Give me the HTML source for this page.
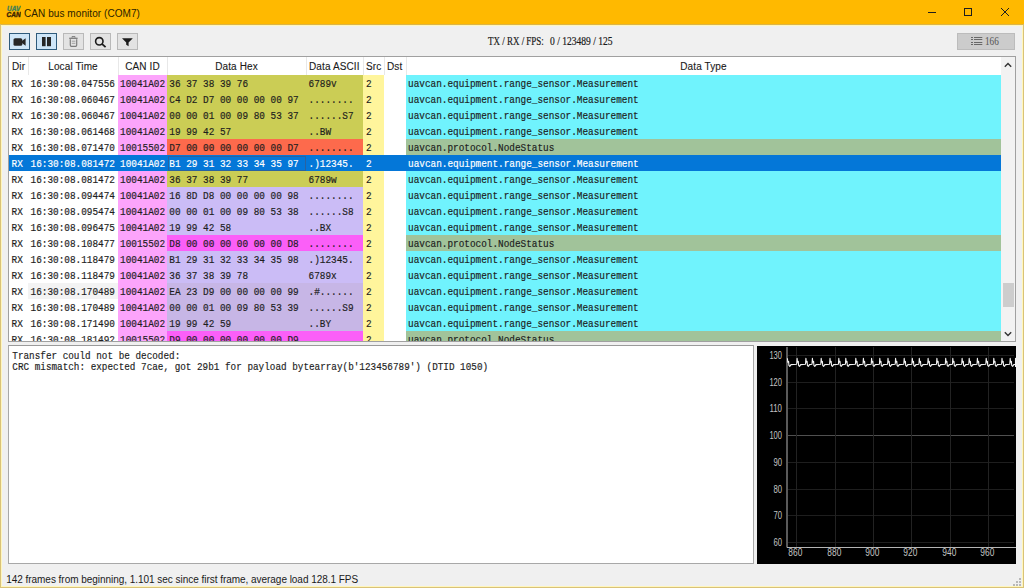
<!DOCTYPE html>
<html><head><meta charset="utf-8">
<style>
*{box-sizing:border-box;margin:0;padding:0}
html,body{width:1024px;height:588px;overflow:hidden;background:#f0f0f0;font-family:"Liberation Sans",sans-serif;}
.abs{position:absolute}
#title{position:absolute;left:0;top:0;width:1024px;height:24px;background:#ffb900}
#title .t{position:absolute;left:24px;top:6.5px;font-size:10px;line-height:14px;color:#2a1d00;letter-spacing:0.07px}
#wb{position:absolute;left:0;top:24px;width:1024px;height:564px;border-left:1px solid #d9c278;border-right:1px solid #d9c278;border-bottom:1px solid #d9c278;border-top:1px solid #dcb54a;box-shadow:inset 1px 1px 0 #fff6bc,inset -1px -1px 0 #fff6bc}
.btn{position:absolute;top:33px;width:21px;height:17px;border:1px solid #b9b9b9;background:#e3e3e3}
.btn.on{border-color:#2f5b7c;background:#cfe6f8;border-bottom-width:1.5px}
#tbl{position:absolute;left:8px;top:56px;width:1008px;height:286px;border:1px solid #a0a0a0;background:#fff;overflow:hidden}
.hdr{position:absolute;top:1px;height:18px;font-size:10px;line-height:18px;color:#1a1a1a;text-align:center;letter-spacing:0.12px;-webkit-text-stroke:0.1px #1a1a1a}
.hsep{position:absolute;top:0;width:1px;height:18px;background:#e8e8e8}
.row{position:absolute;left:0;height:16px;width:992px;font-family:"Liberation Mono",monospace;font-size:9.4px;line-height:16px;color:#1e1e1e;white-space:pre}
.row span{position:absolute;top:0;height:16px;padding-top:1px}
.row span.tx{transform:scaleY(1.15);transform-origin:0 6px;-webkit-text-stroke:0.16px currentColor}
#sb{position:absolute;left:992px;top:0;width:14px;height:284px;background:#f2f2f2}
#edit{position:absolute;left:8px;top:345px;width:746px;height:219px;border:1px solid #a8a8a8;border-top-color:#9a9a9a;background:#fff;font-family:"Liberation Mono",monospace;font-size:9.33px;line-height:11px;color:#1e1e1e;white-space:pre;padding:4px 0 0 3.3px}
#edit span{display:block;transform:scaleY(1.15);transform-origin:0 3px;-webkit-text-stroke:0.15px currentColor;height:11.3px}
#plot{position:absolute;left:757px;top:346px;width:259px;height:218px;background:#000}
#status{position:absolute;left:6.2px;top:573px;font-size:10px;line-height:14px;color:#1a1a1a;letter-spacing:-0.035px}
</style></head><body>

<div id="title">
<svg class="abs" style="left:6px;top:5px" width="15" height="13" viewBox="0 0 15 13"><text x="1" y="5.5" font-family="Liberation Sans" font-weight="bold" font-style="italic" font-size="6.5" fill="#4a8a5e" stroke="#3f7a50" stroke-width="0.35">UAV</text><text x="0.5" y="12" font-family="Liberation Sans" font-weight="bold" font-style="italic" font-size="6.5" fill="#3a2400" stroke="#3a2400" stroke-width="0.35">CAN</text></svg>
<div class="t">CAN bus monitor (COM7)</div>
<div class="abs" style="left:928px;top:12px;width:8px;height:1px;background:#1e1e1e"></div>
<div class="abs" style="left:964px;top:8px;width:8px;height:8px;border:1px solid #1e1e1e"></div>
<svg class="abs" style="left:1000px;top:7px" width="11" height="11" viewBox="0 0 11 11"><path d="M1 1L9 9M9 1L1 9" stroke="#1e1e1e" stroke-width="1"/></svg>
</div>
<div id="wb"></div>
<div class="btn on" style="left:9px"></div><div class="btn on" style="left:36px"></div><div class="btn" style="left:63px"></div><div class="btn" style="left:90px"></div><div class="btn" style="left:117px"></div>
<svg class="abs" style="left:0;top:0" width="150" height="56" viewBox="0 0 150 56"><rect x="13.5" y="38.2" width="8.8" height="7.6" rx="1.6" fill="#262626"/><path d="M21.5 41.2L25.6 38.3V45.7L21.5 42.8Z" fill="#262626"/><rect x="42" y="37" width="3.6" height="9.2" fill="#262626"/><rect x="47" y="37" width="4" height="9.2" fill="#262626"/><path d="M72 37.6V36.6H75V37.6" stroke="#7c7c7c" stroke-width="1" fill="none"/><path d="M69.2 38.3H77.6" stroke="#7c7c7c" stroke-width="1.3"/><path d="M70.3 39.2V45a1.4 1.4 0 0 0 1.4 1.4h3.6a1.4 1.4 0 0 0 1.4-1.4V39.2" stroke="#7c7c7c" stroke-width="1.2" fill="none"/><path d="M71.8 41.2h3.6M71.8 43.3h3.6" stroke="#9a9a9a" stroke-width="0.9"/><circle cx="99.3" cy="41.3" r="3.7" stroke="#1c1c1c" stroke-width="1.6" fill="none"/><path d="M101.9 43.9L105.6 47.1" stroke="#1c1c1c" stroke-width="1.8"/><path d="M122 38.3H132.8L128.6 42.4V46.2L126.2 44.8V42.4Z" fill="#1c1c1c"/></svg>
<div class="abs" style="left:488px;top:34px;font-family:'Liberation Serif',serif;font-size:11.5px;line-height:14px;color:#1a1a1a;white-space:pre;transform:scaleX(0.78);transform-origin:0 0;-webkit-text-stroke:0.2px #1a1a1a">TX / RX / FPS:</div>
<div class="abs" style="left:549.5px;top:34px;font-family:'Liberation Serif',serif;font-size:11.5px;line-height:14px;color:#1a1a1a;white-space:pre;transform:scaleX(0.83);transform-origin:0 0;-webkit-text-stroke:0.2px #1a1a1a">0 / 123489 / 125</div>
<div class="abs" style="left:957px;top:33px;width:58px;height:17px;border:1px solid #bcbcbc;background:#cccccc"></div>
<svg class="abs" style="left:960px;top:33px" width="50" height="17" viewBox="960 33 50 17"><path d="M971 37.5h2M974 37.5h8.3M971 39.5h2M974 39.5h8.3M971 42.5h2M974 42.5h8.3M971 44.5h2M974 44.5h8.3" stroke="#686868" stroke-width="1"/></svg>
<div class="abs" style="left:985px;top:34px;font-family:'Liberation Serif',serif;font-size:11.5px;line-height:14px;color:#5a5a5a;transform:scaleX(0.8);transform-origin:0 0;-webkit-text-stroke:0.1px #5a5a5a">166</div>
<div id="tbl">
<div class="hdr" style="left:0px;width:19px;text-align:left;padding-left:3px">Dir</div>
<div class="hsep" style="left:19px"></div>
<div class="hdr" style="left:19px;width:90px">Local Time</div>
<div class="hsep" style="left:109px"></div>
<div class="hdr" style="left:109px;width:49px">CAN ID</div>
<div class="hsep" style="left:158px"></div>
<div class="hdr" style="left:158px;width:139px">Data Hex</div>
<div class="hsep" style="left:297px"></div>
<div class="hdr" style="left:297px;width:57px;text-align:left;padding-left:3px">Data ASCII</div>
<div class="hsep" style="left:354px"></div>
<div class="hdr" style="left:354px;width:21px;text-align:left;padding-left:3px">Src</div>
<div class="hsep" style="left:375px"></div>
<div class="hdr" style="left:375px;width:22px;text-align:left;padding-left:3px">Dst</div>
<div class="hsep" style="left:397px"></div>
<div class="hdr" style="left:397px;width:595px">Data Type</div>
<div class="row" style="top:18px;color:#1e1e1e">
<span style="left:19px;width:90px;background:#fff"></span>
<span style="left:109px;width:49px;background:#fca4fb"></span>
<span style="left:158px;width:196px;background:#cbcd55"></span>
<span style="left:354px;width:21px;background:#fff59c"></span>
<span style="left:397px;width:595px;background:#70f3fd"></span>
<span class="tx" style="left:2.5px">RX</span>
<span class="tx" style="left:21.5px">16:30:08.047556</span>
<span class="tx" style="left:111px">10041A02</span>
<span class="tx" style="left:160.3px">36 37 38 39 76</span>
<span class="tx" style="left:299.5px">6789v</span>
<span class="tx" style="left:357px">2</span>
<span class="tx" style="left:399px">uavcan.equipment.range_sensor.Measurement</span>
</div>
<div class="row" style="top:34px;color:#1e1e1e">
<span style="left:19px;width:90px;background:#fff"></span>
<span style="left:109px;width:49px;background:#fca4fb"></span>
<span style="left:158px;width:196px;background:#cbcd55"></span>
<span style="left:354px;width:21px;background:#fff59c"></span>
<span style="left:397px;width:595px;background:#70f3fd"></span>
<span class="tx" style="left:2.5px">RX</span>
<span class="tx" style="left:21.5px">16:30:08.060467</span>
<span class="tx" style="left:111px">10041A02</span>
<span class="tx" style="left:160.3px">C4 D2 D7 00 00 00 00 97</span>
<span class="tx" style="left:299.5px">........</span>
<span class="tx" style="left:357px">2</span>
<span class="tx" style="left:399px">uavcan.equipment.range_sensor.Measurement</span>
</div>
<div class="row" style="top:50px;color:#1e1e1e">
<span style="left:19px;width:90px;background:#fff"></span>
<span style="left:109px;width:49px;background:#fca4fb"></span>
<span style="left:158px;width:196px;background:#cbcd55"></span>
<span style="left:354px;width:21px;background:#fff59c"></span>
<span style="left:397px;width:595px;background:#70f3fd"></span>
<span class="tx" style="left:2.5px">RX</span>
<span class="tx" style="left:21.5px">16:30:08.060467</span>
<span class="tx" style="left:111px">10041A02</span>
<span class="tx" style="left:160.3px">00 00 01 00 09 80 53 37</span>
<span class="tx" style="left:299.5px">......S7</span>
<span class="tx" style="left:357px">2</span>
<span class="tx" style="left:399px">uavcan.equipment.range_sensor.Measurement</span>
</div>
<div class="row" style="top:66px;color:#1e1e1e">
<span style="left:19px;width:90px;background:#fff"></span>
<span style="left:109px;width:49px;background:#fca4fb"></span>
<span style="left:158px;width:196px;background:#cbcd55"></span>
<span style="left:354px;width:21px;background:#fff59c"></span>
<span style="left:397px;width:595px;background:#70f3fd"></span>
<span class="tx" style="left:2.5px">RX</span>
<span class="tx" style="left:21.5px">16:30:08.061468</span>
<span class="tx" style="left:111px">10041A02</span>
<span class="tx" style="left:160.3px">19 99 42 57</span>
<span class="tx" style="left:299.5px">..BW</span>
<span class="tx" style="left:357px">2</span>
<span class="tx" style="left:399px">uavcan.equipment.range_sensor.Measurement</span>
</div>
<div class="row" style="top:82px;color:#1e1e1e">
<span style="left:19px;width:90px;background:#fff"></span>
<span style="left:109px;width:49px;background:#fca4fb"></span>
<span style="left:158px;width:196px;background:#fd6a4c"></span>
<span style="left:354px;width:21px;background:#fff59c"></span>
<span style="left:397px;width:595px;background:#a1c39a"></span>
<span class="tx" style="left:2.5px">RX</span>
<span class="tx" style="left:21.5px">16:30:08.071470</span>
<span class="tx" style="left:111px">10015502</span>
<span class="tx" style="left:160.3px">D7 00 00 00 00 00 00 D7</span>
<span class="tx" style="left:299.5px">........</span>
<span class="tx" style="left:357px">2</span>
<span class="tx" style="left:399px">uavcan.protocol.NodeStatus</span>
</div>
<div class="row" style="top:98px;color:#fff">
<span style="left:0;width:992px;background:#0477d8"></span>
<span style="left:159px;top:1px;width:138px;height:15px;border:1px solid #2a62a0"></span>
<span class="tx" style="left:2.5px">RX</span>
<span class="tx" style="left:21.5px">16:30:08.081472</span>
<span class="tx" style="left:111px">10041A02</span>
<span class="tx" style="left:160.3px">B1 29 31 32 33 34 35 97</span>
<span class="tx" style="left:299.5px">.)12345.</span>
<span class="tx" style="left:357px">2</span>
<span class="tx" style="left:399px">uavcan.equipment.range_sensor.Measurement</span>
</div>
<div class="row" style="top:114px;color:#1e1e1e">
<span style="left:19px;width:90px;background:#fff"></span>
<span style="left:109px;width:49px;background:#fca4fb"></span>
<span style="left:158px;width:196px;background:#cbcd55"></span>
<span style="left:354px;width:21px;background:#fff59c"></span>
<span style="left:397px;width:595px;background:#70f3fd"></span>
<span class="tx" style="left:2.5px">RX</span>
<span class="tx" style="left:21.5px">16:30:08.081472</span>
<span class="tx" style="left:111px">10041A02</span>
<span class="tx" style="left:160.3px">36 37 38 39 77</span>
<span class="tx" style="left:299.5px">6789w</span>
<span class="tx" style="left:357px">2</span>
<span class="tx" style="left:399px">uavcan.equipment.range_sensor.Measurement</span>
</div>
<div class="row" style="top:130px;color:#1e1e1e">
<span style="left:19px;width:90px;background:#fff"></span>
<span style="left:109px;width:49px;background:#fca4fb"></span>
<span style="left:158px;width:196px;background:#cbbcf6"></span>
<span style="left:354px;width:21px;background:#fff59c"></span>
<span style="left:397px;width:595px;background:#70f3fd"></span>
<span class="tx" style="left:2.5px">RX</span>
<span class="tx" style="left:21.5px">16:30:08.094474</span>
<span class="tx" style="left:111px">10041A02</span>
<span class="tx" style="left:160.3px">16 8D D8 00 00 00 00 98</span>
<span class="tx" style="left:299.5px">........</span>
<span class="tx" style="left:357px">2</span>
<span class="tx" style="left:399px">uavcan.equipment.range_sensor.Measurement</span>
</div>
<div class="row" style="top:146px;color:#1e1e1e">
<span style="left:19px;width:90px;background:#fff"></span>
<span style="left:109px;width:49px;background:#fca4fb"></span>
<span style="left:158px;width:196px;background:#cbbcf6"></span>
<span style="left:354px;width:21px;background:#fff59c"></span>
<span style="left:397px;width:595px;background:#70f3fd"></span>
<span class="tx" style="left:2.5px">RX</span>
<span class="tx" style="left:21.5px">16:30:08.095474</span>
<span class="tx" style="left:111px">10041A02</span>
<span class="tx" style="left:160.3px">00 00 01 00 09 80 53 38</span>
<span class="tx" style="left:299.5px">......S8</span>
<span class="tx" style="left:357px">2</span>
<span class="tx" style="left:399px">uavcan.equipment.range_sensor.Measurement</span>
</div>
<div class="row" style="top:162px;color:#1e1e1e">
<span style="left:19px;width:90px;background:#fff"></span>
<span style="left:109px;width:49px;background:#fca4fb"></span>
<span style="left:158px;width:196px;background:#cbbcf6"></span>
<span style="left:354px;width:21px;background:#fff59c"></span>
<span style="left:397px;width:595px;background:#70f3fd"></span>
<span class="tx" style="left:2.5px">RX</span>
<span class="tx" style="left:21.5px">16:30:08.096475</span>
<span class="tx" style="left:111px">10041A02</span>
<span class="tx" style="left:160.3px">19 99 42 58</span>
<span class="tx" style="left:299.5px">..BX</span>
<span class="tx" style="left:357px">2</span>
<span class="tx" style="left:399px">uavcan.equipment.range_sensor.Measurement</span>
</div>
<div class="row" style="top:178px;color:#1e1e1e">
<span style="left:19px;width:90px;background:#fff"></span>
<span style="left:109px;width:49px;background:#fca4fb"></span>
<span style="left:158px;width:196px;background:#fb5ff8"></span>
<span style="left:354px;width:21px;background:#fff59c"></span>
<span style="left:397px;width:595px;background:#a1c39a"></span>
<span class="tx" style="left:2.5px">RX</span>
<span class="tx" style="left:21.5px">16:30:08.108477</span>
<span class="tx" style="left:111px">10015502</span>
<span class="tx" style="left:160.3px">D8 00 00 00 00 00 00 D8</span>
<span class="tx" style="left:299.5px">........</span>
<span class="tx" style="left:357px">2</span>
<span class="tx" style="left:399px">uavcan.protocol.NodeStatus</span>
</div>
<div class="row" style="top:194px;color:#1e1e1e">
<span style="left:19px;width:90px;background:#fff"></span>
<span style="left:109px;width:49px;background:#fca4fb"></span>
<span style="left:158px;width:196px;background:#cbbcf6"></span>
<span style="left:354px;width:21px;background:#fff59c"></span>
<span style="left:397px;width:595px;background:#70f3fd"></span>
<span class="tx" style="left:2.5px">RX</span>
<span class="tx" style="left:21.5px">16:30:08.118479</span>
<span class="tx" style="left:111px">10041A02</span>
<span class="tx" style="left:160.3px">B1 29 31 32 33 34 35 98</span>
<span class="tx" style="left:299.5px">.)12345.</span>
<span class="tx" style="left:357px">2</span>
<span class="tx" style="left:399px">uavcan.equipment.range_sensor.Measurement</span>
</div>
<div class="row" style="top:210px;color:#1e1e1e">
<span style="left:19px;width:90px;background:#fff"></span>
<span style="left:109px;width:49px;background:#fca4fb"></span>
<span style="left:158px;width:196px;background:#cbbcf6"></span>
<span style="left:354px;width:21px;background:#fff59c"></span>
<span style="left:397px;width:595px;background:#70f3fd"></span>
<span class="tx" style="left:2.5px">RX</span>
<span class="tx" style="left:21.5px">16:30:08.118479</span>
<span class="tx" style="left:111px">10041A02</span>
<span class="tx" style="left:160.3px">36 37 38 39 78</span>
<span class="tx" style="left:299.5px">6789x</span>
<span class="tx" style="left:357px">2</span>
<span class="tx" style="left:399px">uavcan.equipment.range_sensor.Measurement</span>
</div>
<div class="row" style="top:226px;color:#1e1e1e">
<span style="left:19px;width:90px;background:#f3f3f3"></span>
<span style="left:109px;width:49px;background:#fca4fb"></span>
<span style="left:158px;width:196px;background:#c7b6e6"></span>
<span style="left:354px;width:21px;background:#fff59c"></span>
<span style="left:397px;width:595px;background:#70f3fd"></span>
<span class="tx" style="left:2.5px">RX</span>
<span class="tx" style="left:21.5px">16:30:08.170489</span>
<span class="tx" style="left:111px">10041A02</span>
<span class="tx" style="left:160.3px">EA 23 D9 00 00 00 00 99</span>
<span class="tx" style="left:299.5px">.#......</span>
<span class="tx" style="left:357px">2</span>
<span class="tx" style="left:399px">uavcan.equipment.range_sensor.Measurement</span>
</div>
<div class="row" style="top:242px;color:#1e1e1e">
<span style="left:19px;width:90px;background:#fff"></span>
<span style="left:109px;width:49px;background:#fca4fb"></span>
<span style="left:158px;width:196px;background:#c7b6e6"></span>
<span style="left:354px;width:21px;background:#fff59c"></span>
<span style="left:397px;width:595px;background:#70f3fd"></span>
<span class="tx" style="left:2.5px">RX</span>
<span class="tx" style="left:21.5px">16:30:08.170489</span>
<span class="tx" style="left:111px">10041A02</span>
<span class="tx" style="left:160.3px">00 00 01 00 09 80 53 39</span>
<span class="tx" style="left:299.5px">......S9</span>
<span class="tx" style="left:357px">2</span>
<span class="tx" style="left:399px">uavcan.equipment.range_sensor.Measurement</span>
</div>
<div class="row" style="top:258px;color:#1e1e1e">
<span style="left:19px;width:90px;background:#fff"></span>
<span style="left:109px;width:49px;background:#fca4fb"></span>
<span style="left:158px;width:196px;background:#c7b6e6"></span>
<span style="left:354px;width:21px;background:#fff59c"></span>
<span style="left:397px;width:595px;background:#70f3fd"></span>
<span class="tx" style="left:2.5px">RX</span>
<span class="tx" style="left:21.5px">16:30:08.171490</span>
<span class="tx" style="left:111px">10041A02</span>
<span class="tx" style="left:160.3px">19 99 42 59</span>
<span class="tx" style="left:299.5px">..BY</span>
<span class="tx" style="left:357px">2</span>
<span class="tx" style="left:399px">uavcan.equipment.range_sensor.Measurement</span>
</div>
<div class="row" style="top:274px;color:#1e1e1e">
<span style="left:19px;width:90px;background:#fff"></span>
<span style="left:109px;width:49px;background:#fca4fb"></span>
<span style="left:158px;width:196px;background:#fb5ff8"></span>
<span style="left:354px;width:21px;background:#fff59c"></span>
<span style="left:397px;width:595px;background:#a1c39a"></span>
<span class="tx" style="left:2.5px">RX</span>
<span class="tx" style="left:21.5px">16:30:08.181492</span>
<span class="tx" style="left:111px">10015502</span>
<span class="tx" style="left:160.3px">D9 00 00 00 00 00 00 D9</span>
<span class="tx" style="left:299.5px">........</span>
<span class="tx" style="left:357px">2</span>
<span class="tx" style="left:399px">uavcan.protocol.NodeStatus</span>
</div>
<div id="sb">
<svg class="abs" style="left:3px;top:5px" width="8" height="6" viewBox="0 0 8 6"><path d="M0.8 4.8L4 1.6L7.2 4.8" stroke="#333" stroke-width="1.4" fill="none"/></svg>
<div class="abs" style="left:2px;top:226px;width:11px;height:24px;background:#cdcdcd"></div>
<svg class="abs" style="left:3px;top:274px" width="8" height="6" viewBox="0 0 8 6"><path d="M0.8 1.2L4 4.4L7.2 1.2" stroke="#333" stroke-width="1.4" fill="none"/></svg>
</div>
</div>
<div id="edit"><span>Transfer could not be decoded:</span><span>CRC mismatch: expected 7cae, got 29b1 for payload bytearray(b'123456789') (DTID 1050)</span></div>
<div id="plot"></div>
<svg class="abs" style="left:0;top:0" width="1024" height="588" viewBox="0 0 1024 588"><line x1="788" y1="542.5" x2="1014" y2="542.5" stroke="#1e1e1e" stroke-width="1"/><text x="782" y="546.2" text-anchor="end" font-family="Liberation Sans" font-size="10" fill="#c4c4c4" textLength="8.6" lengthAdjust="spacingAndGlyphs">60</text><line x1="788" y1="515.5" x2="1014" y2="515.5" stroke="#1e1e1e" stroke-width="1"/><text x="782" y="519.2" text-anchor="end" font-family="Liberation Sans" font-size="10" fill="#c4c4c4" textLength="8.6" lengthAdjust="spacingAndGlyphs">70</text><line x1="788" y1="489.5" x2="1014" y2="489.5" stroke="#1e1e1e" stroke-width="1"/><text x="782" y="493.2" text-anchor="end" font-family="Liberation Sans" font-size="10" fill="#c4c4c4" textLength="8.6" lengthAdjust="spacingAndGlyphs">80</text><line x1="788" y1="462.5" x2="1014" y2="462.5" stroke="#1e1e1e" stroke-width="1"/><text x="782" y="466.2" text-anchor="end" font-family="Liberation Sans" font-size="10" fill="#c4c4c4" textLength="8.6" lengthAdjust="spacingAndGlyphs">90</text><line x1="788" y1="435.5" x2="1014" y2="435.5" stroke="#505050" stroke-width="1"/><text x="782" y="439.2" text-anchor="end" font-family="Liberation Sans" font-size="10" fill="#c4c4c4" textLength="12.6" lengthAdjust="spacingAndGlyphs">100</text><line x1="788" y1="408.5" x2="1014" y2="408.5" stroke="#1e1e1e" stroke-width="1"/><text x="782" y="412.2" text-anchor="end" font-family="Liberation Sans" font-size="10" fill="#c4c4c4" textLength="12.6" lengthAdjust="spacingAndGlyphs">110</text><line x1="788" y1="382.5" x2="1014" y2="382.5" stroke="#1e1e1e" stroke-width="1"/><text x="782" y="386.2" text-anchor="end" font-family="Liberation Sans" font-size="10" fill="#c4c4c4" textLength="12.6" lengthAdjust="spacingAndGlyphs">120</text><line x1="788" y1="355.5" x2="1014" y2="355.5" stroke="#1e1e1e" stroke-width="1"/><text x="782" y="359.2" text-anchor="end" font-family="Liberation Sans" font-size="10" fill="#c4c4c4" textLength="12.6" lengthAdjust="spacingAndGlyphs">130</text><line x1="796.5" y1="347" x2="796.5" y2="547" stroke="#222222" stroke-width="1"/><text x="795.3" y="556.3" text-anchor="middle" font-family="Liberation Sans" font-size="10" fill="#c4c4c4" textLength="14" lengthAdjust="spacingAndGlyphs">860</text><line x1="835.5" y1="347" x2="835.5" y2="547" stroke="#222222" stroke-width="1"/><text x="834.3" y="556.3" text-anchor="middle" font-family="Liberation Sans" font-size="10" fill="#c4c4c4" textLength="14" lengthAdjust="spacingAndGlyphs">880</text><line x1="873.5" y1="347" x2="873.5" y2="547" stroke="#222222" stroke-width="1"/><text x="872.3" y="556.3" text-anchor="middle" font-family="Liberation Sans" font-size="10" fill="#c4c4c4" textLength="14" lengthAdjust="spacingAndGlyphs">900</text><line x1="911.5" y1="347" x2="911.5" y2="547" stroke="#222222" stroke-width="1"/><text x="910.3" y="556.3" text-anchor="middle" font-family="Liberation Sans" font-size="10" fill="#c4c4c4" textLength="14" lengthAdjust="spacingAndGlyphs">920</text><line x1="950.5" y1="347" x2="950.5" y2="547" stroke="#222222" stroke-width="1"/><text x="949.3" y="556.3" text-anchor="middle" font-family="Liberation Sans" font-size="10" fill="#c4c4c4" textLength="14" lengthAdjust="spacingAndGlyphs">940</text><line x1="988.5" y1="347" x2="988.5" y2="547" stroke="#222222" stroke-width="1"/><text x="987.3" y="556.3" text-anchor="middle" font-family="Liberation Sans" font-size="10" fill="#c4c4c4" textLength="14" lengthAdjust="spacingAndGlyphs">960</text><path d="M787 347V547.5H1016" stroke="#b4b4b4" stroke-width="1" fill="none"/><path d="M787.4 358.2 L787.8 362.3 L788.6 361.4 L788.9 365.3 L789.8 366.4 L791.0 364.6 L796.7 364.3 L797.1 358.2 L797.5 362.3 L798.3 361.4 L798.6 365.3 L799.5 366.4 L800.7 364.6 L805.5 364.3 L805.9 358.2 L806.3 362.3 L807.1 361.4 L807.4 365.3 L808.3 366.4 L809.5 364.6 L812.0 364.3 L812.4 358.2 L812.8 362.3 L813.6 361.4 L813.9 365.3 L814.8 366.4 L816.0 364.6 L820.8 364.3 L821.2 358.2 L821.6 362.3 L822.4 361.4 L822.7 365.3 L823.6 366.4 L824.8 364.6 L829.6 364.3 L830.0 358.2 L830.4 362.3 L831.2 361.4 L831.5 365.3 L832.4 366.4 L833.6 364.6 L838.4 364.3 L838.8 358.2 L839.2 362.3 L840.0 361.4 L840.3 365.3 L841.2 366.4 L842.4 364.6 L845.4 364.3 L845.8 358.2 L846.2 362.3 L847.0 361.4 L847.3 365.3 L848.2 366.4 L849.4 364.6 L855.4 364.3 L855.8 358.2 L856.2 362.3 L857.0 361.4 L857.3 365.3 L858.2 366.4 L859.4 364.6 L863.0 364.3 L863.4 358.2 L863.8 362.3 L864.6 361.4 L864.9 365.3 L865.8 366.4 L867.0 364.6 L871.2 364.3 L871.6 358.2 L872.0 362.3 L872.8 361.4 L873.1 365.3 L874.0 366.4 L875.2 364.6 L879.4 364.3 L879.8 358.2 L880.2 362.3 L881.0 361.4 L881.3 365.3 L882.2 366.4 L883.4 364.6 L887.6 364.3 L888.0 358.2 L888.4 362.3 L889.2 361.4 L889.5 365.3 L890.4 366.4 L891.6 364.6 L895.2 364.3 L895.6 358.2 L896.0 362.3 L896.8 361.4 L897.1 365.3 L898.0 366.4 L899.2 364.6 L903.8 364.3 L904.2 358.2 L904.6 362.3 L905.4 361.4 L905.7 365.3 L906.6 366.4 L907.8 364.6 L911.9 364.3 L912.3 358.2 L912.7 362.3 L913.5 361.4 L913.8 365.3 L914.7 366.4 L915.9 364.6 L918.9 364.3 L919.3 358.2 L919.7 362.3 L920.5 361.4 L920.8 365.3 L921.7 366.4 L922.9 364.6 L927.7 364.3 L928.1 358.2 L928.5 362.3 L929.3 361.4 L929.6 365.3 L930.5 366.4 L931.7 364.6 L936.5 364.3 L936.9 358.2 L937.3 362.3 L938.1 361.4 L938.4 365.3 L939.3 366.4 L940.5 364.6 L945.3 364.3 L945.7 358.2 L946.1 362.3 L946.9 361.4 L947.2 365.3 L948.1 366.4 L949.3 364.6 L952.4 364.3 L952.8 358.2 L953.2 362.3 L954.0 361.4 L954.3 365.3 L955.2 366.4 L956.4 364.6 L961.7 364.3 L962.1 358.2 L962.5 362.3 L963.3 361.4 L963.6 365.3 L964.5 366.4 L965.7 364.6 L968.8 364.3 L969.2 358.2 L969.6 362.3 L970.4 361.4 L970.7 365.3 L971.6 366.4 L972.8 364.6 L977.0 364.3 L977.4 358.2 L977.8 362.3 L978.6 361.4 L978.9 365.3 L979.8 366.4 L981.0 364.6 L985.8 364.3 L986.2 358.2 L986.6 362.3 L987.4 361.4 L987.7 365.3 L988.6 366.4 L989.8 364.6 L993.4 364.3 L993.8 358.2 L994.2 362.3 L995.0 361.4 L995.3 365.3 L996.2 366.4 L997.4 364.6 L1001.6 364.3 L1002.0 358.2 L1002.4 362.3 L1003.2 361.4 L1003.5 365.3 L1004.4 366.4 L1005.6 364.6 L1009.8 364.3 L1010.2 358.2 L1010.6 362.3 L1011.4 361.4 L1011.7 365.3 L1012.6 366.4 L1013.8 364.6 L1015.5 364.3 L1015.5 358.2 L1015.5 362.3 L1015.5 361.4 L1015.5 365.3 L1015.5 366.4 L1015.5 364.6" stroke="#f4f4f4" stroke-width="1.1" fill="none" stroke-linejoin="round"/></svg>
<div id="status">142 frames from beginning, 1.101 sec since first frame, average load 128.1 FPS</div>
<svg class="abs" style="left:1012px;top:577px" width="10" height="10" viewBox="0 0 10 10"><g fill="#b8b8b8"><rect x="7" y="1" width="2" height="2"/><rect x="4" y="4" width="2" height="2"/><rect x="7" y="4" width="2" height="2"/><rect x="1" y="7" width="2" height="2"/><rect x="4" y="7" width="2" height="2"/><rect x="7" y="7" width="2" height="2"/></g></svg>
</body></html>
